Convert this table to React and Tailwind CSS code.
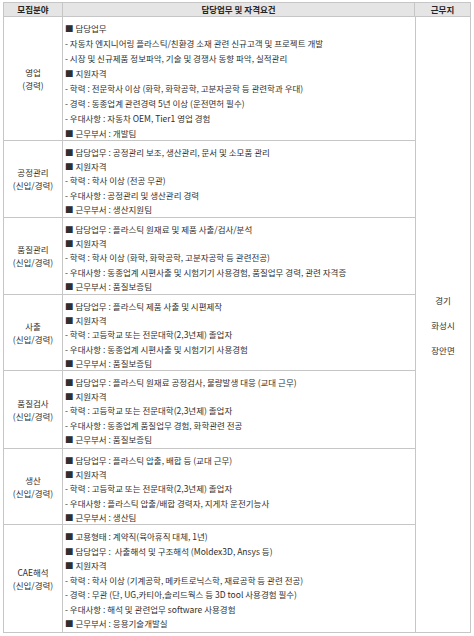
import React from 'react';

const rows = [
  {
    name: '영업',
    sub: '(경력)',
    h: 'h-[124px]',
    lh: 'leading-[15px]',
    lines: [
      '■ 담당업무',
      '- 자동차 엔지니어링 플라스틱/친환경 소재 관련 신규고객 및 프로젝트 개발',
      '- 시장 및 신규제품 정보파악, 기술 및 경쟁사 동향 파악, 실적관리',
      '■ 지원자격',
      '- 학력 : 전문학사 이상 (화학, 화학공학, 고분자공학 등 관련학과 우대)',
      '- 경력 : 동종업계 관련경력 5년 이상 (운전면허 필수)',
      '- 우대사항 : 자동차 OEM, Tier1 영업 경험',
      '■ 근무부서 : 개발팀',
    ],
  },
  {
    name: '공정관리',
    sub: '(신입/경력)',
    h: 'h-[77px]',
    lh: 'leading-[14.2px]',
    lines: [
      '■ 담당업무 : 공정관리 보조, 생산관리, 문서 및 소모품 관리',
      '■ 지원자격',
      '- 학력 : 학사 이상 (전공 무관)',
      '- 우대사항 : 공정관리 및 생산관리 경력',
      '■ 근무부서 : 생산지원팀',
    ],
  },
  {
    name: '품질관리',
    sub: '(신입/경력)',
    h: 'h-[77px]',
    lh: 'leading-[14.2px]',
    lines: [
      '■ 담당업무 : 플라스틱 원재료 및 제품 사출/검사/분석',
      '■ 지원자격',
      '- 학력 : 학사 이상 (화학, 화학공학, 고분자공학 등 관련전공)',
      '- 우대사항 : 동종업계 시편사출 및 시험기기 사용경험, 품질업무 경력, 관련 자격증',
      '■ 근무부서 : 품질보증팀',
    ],
  },
  {
    name: '사출',
    sub: '(신입/경력)',
    h: 'h-[76px]',
    lh: 'leading-[14.2px]',
    lines: [
      '■ 담당업무 : 플라스틱 제품 사출 및 시편제작',
      '■ 지원자격',
      '- 학력 : 고등학교 또는 전문대학(2,3년제) 졸업자',
      '- 우대사항 : 동종업계 시편사출 및 시험기기 사용경험',
      '■ 근무부서 : 품질보증팀',
    ],
  },
  {
    name: '품질검사',
    sub: '(신입/경력)',
    h: 'h-[78px]',
    lh: 'leading-[14.2px]',
    lines: [
      '■ 담당업무 : 플라스틱 원재료 공정검사, 불량발생 대응 (교대 근무)',
      '■ 지원자격',
      '- 학력 : 고등학교 또는 전문대학(2,3년제) 졸업자',
      '- 우대사항 : 동종업계 품질업무 경험, 화학관련 전공',
      '■ 근무부서 : 품질보증팀',
    ],
  },
  {
    name: '생산',
    sub: '(신입/경력)',
    h: 'h-[76px]',
    lh: 'leading-[14.2px]',
    lines: [
      '■ 담당업무 : 플라스틱 압출, 배합 등 (교대 근무)',
      '■ 지원자격',
      '- 학력 : 고등학교 또는 전문대학(2,3년제) 졸업자',
      '- 우대사항 : 플라스틱 압출/배합 경력자, 지게차 운전기능사',
      '■ 근무부서 : 생산팀',
    ],
  },
  {
    name: 'CAE해석',
    sub: '(신입/경력)',
    h: 'h-[108px]',
    lh: 'leading-[14.5px]',
    lines: [
      '■ 고용형태 : 계약직(육아휴직 대체, 1년)',
      '■ 담당업무 :  사출해석 및 구조해석 (Moldex3D, Ansys 등)',
      '■ 지원자격',
      '- 학력 : 학사 이상 (기계공학, 메카트로닉스학, 재료공학 등 관련 전공)',
      '- 경력 : 무관 (단, UG,카티아,솔리드웍스 등 3D tool 사용경험 필수)',
      '- 우대사항 : 해석 및 관련업무 software 사용경험',
      '■ 근무부서 : 응용기술개발실',
    ],
  },
];

export default function App() {
  return (
    <div
      className="w-[474px] h-[636px] bg-white pt-[2px] pl-[3px] text-[8.5px] text-[#2f2f2f]"
      style={{ fontFamily: '"Noto Sans CJK KR", "Noto Sans", sans-serif' }}
    >
      <div className="w-[468px] border border-[#c6c6c6]">
        {/* 헤더 */}
        <div className="flex h-[13px] bg-[#e5e5e5] font-semibold text-[#262626] leading-[13px]">
          <div className="w-[59px] border-r border-[#c6c6c6] text-center">모집분야</div>
          <div className="w-[352px] border-r border-[#c6c6c6] text-center">담당업무 및 자격요건</div>
          <div className="flex-1 text-center">근무지</div>
        </div>

        <div className="flex">
          <div className="w-[411px]">
            {rows.map((r) => (
              <div key={r.name} className={`flex border-t border-[#c6c6c6] ${r.h}`}>
                <div className="w-[59px] border-r border-[#c6c6c6] flex flex-col items-center justify-center leading-[13px]">
                  <div>{r.name}</div>
                  <div>{r.sub}</div>
                </div>
                <div className={`flex-1 flex flex-col pl-[2px] pt-[4px] ${r.lh}`}>
                  {r.lines.map((l, j) => (
                    <div key={j} className="whitespace-pre">{l}</div>
                  ))}
                </div>
              </div>
            ))}
          </div>

          {/* 근무지 */}
          <div className="flex-1 border-t border-l border-[#c6c6c6] flex flex-col items-center justify-center gap-[11px] leading-[14px]">
            <div>경기</div>
            <div>화성시</div>
            <div>장안면</div>
          </div>
        </div>
      </div>
    </div>
  );
}
